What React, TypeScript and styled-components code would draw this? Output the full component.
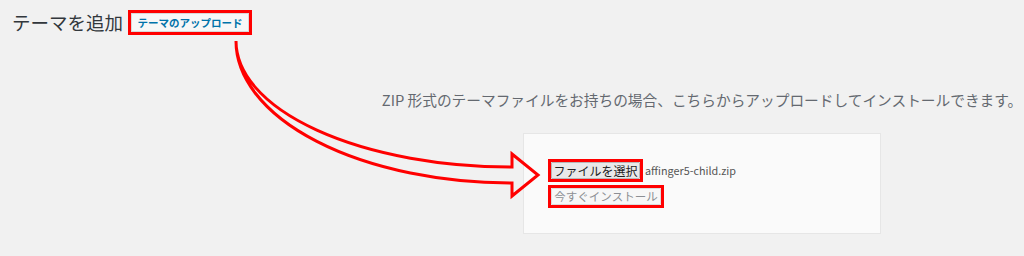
import React from "react";
import styled, { createGlobalStyle } from "styled-components";

const Global = createGlobalStyle`
  html, body {
    margin: 0;
    padding: 0;
    background: #f1f1f1;
    overflow: hidden;
  }
  body {
    font-family: "Noto Sans CJK JP", "Noto Sans", sans-serif;
    color: #23282d;
  }
`;

const Page = styled.div`
  position: relative;
  width: 1024px;
  height: 256px;
  overflow: hidden;
`;

const Wrap = styled.div`
  padding: 10px 0 0 12px;
  width: 1392px;
  box-sizing: border-box;
`;

const Header = styled.div`
  display: flex;
  align-items: center;
  gap: 5px;
  height: 25px;
`;

const Title = styled.h1`
  margin: 0;
  font-size: 18.5px;
  font-weight: 400;
  line-height: 25px;
  color: #32373c;
`;

const Highlight = styled.span`
  display: inline-flex;
  border: 3px solid #ff0000;
  box-sizing: border-box;
`;

const PageAction = styled.button`
  font-family: inherit;
  font-size: 10.5px;
  font-weight: 700;
  color: #0073aa;
  background: #f7f7f7;
  border: 1px solid #d8d8d8;
  height: 19px;
  width: 118px;
  padding: 0;
  line-height: 17px;
  cursor: pointer;
`;

const Upload = styled.div`
  width: 1380px;
  margin-top: 55px;
  display: flex;
  flex-direction: column;
  align-items: center;
`;

const Help = styled.p`
  margin: 0;
  font-size: 14.7px;
  line-height: 20px;
  color: #646970;
  white-space: nowrap;
`;

const Card = styled.div`
  margin-top: 23px;
  width: 358px;
  height: 101px;
  box-sizing: border-box;
  background: #fafafa;
  border: 1px solid #e6e6e6;
  padding: 25px 24px;
  display: flex;
  flex-direction: column;
  gap: 3px;
`;

const Row = styled.div`
  display: flex;
  align-items: center;
  gap: 2px;
`;

const FileButton = styled.button<{ $w: number; $muted?: boolean }>`
  font-family: inherit;
  font-size: ${(p) => (p.$muted ? "11.5px" : "12px")};
  width: ${(p) => p.$w}px;
  height: 17px;
  padding: 0;
  line-height: 15px;
  color: ${(p) => (p.$muted ? "#8c8f94" : "#222")};
  background: ${(p) => (p.$muted ? "#f7f7f7" : "#e9e9e9")};
  border: 1px solid ${(p) => (p.$muted ? "#dcdcdc" : "#b8b8b8")};
  border-radius: 1px;
  white-space: nowrap;
`;

const FileName = styled.span`
  font-size: 10.8px;
  color: #555;
  line-height: 17px;
`;

const Overlay = styled.svg`
  position: absolute;
  top: 0;
  left: 0;
  pointer-events: none;
`;

export default function App() {
  return (
    <Page>
      <Global />
      <Wrap>
        <Header>
          <Title>テーマを追加</Title>
          <Highlight>
            <PageAction>テーマのアップロード</PageAction>
          </Highlight>
        </Header>
        <Upload>
          <Help>
            ZIP 形式のテーマファイルをお持ちの場合、こちらからアップロードしてインストールできます。
          </Help>
          <Card>
            <Row>
              <Highlight>
                <FileButton $w={89}>ファイルを選択</FileButton>
              </Highlight>
              <FileName>affinger5-child.zip</FileName>
            </Row>
            <Row>
              <Highlight>
                <FileButton $w={110} $muted>
                  今すぐインストール
                </FileButton>
              </Highlight>
            </Row>
          </Card>
        </Upload>
      </Wrap>
      <Overlay width="1024" height="256" viewBox="0 0 1024 256">
        <path
          d="M236 41 A276 126 0 0 0 512 167 L512 154 L538 175 L512 196 L512 183 A276 142 0 0 1 236 41 Z"
          fill="none"
          stroke="#ff0000"
          strokeWidth="3"
          strokeLinejoin="miter"
        />
      </Overlay>
    </Page>
  );
}
